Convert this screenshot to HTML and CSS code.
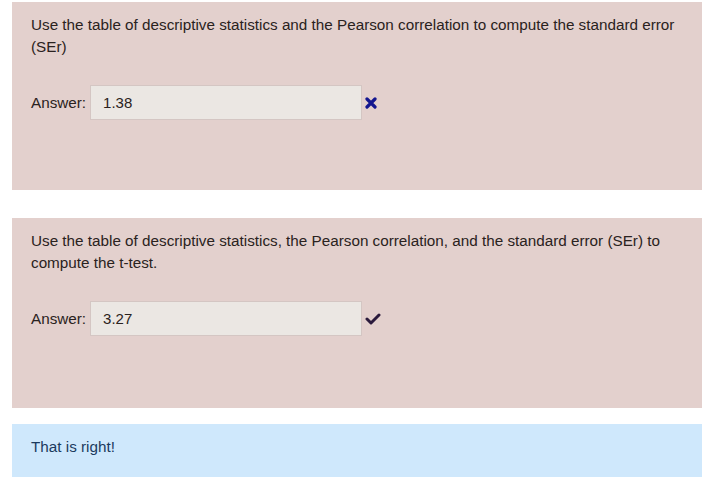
FILE: index.html
```html
<!DOCTYPE html>
<html lang="en">

<head>
    <meta charset="UTF-8">
    <meta name="viewport" content="width=device-width, initial-scale=1.0">
    <title>Correlation Quiz</title>
    <link rel="stylesheet" href="styles.css">
</head>

<body>
    <div class="question">
        <div class="qtext">Use the table of descriptive statistics and the Pearson correlation to compute the standard error (SEr)</div>
        <div class="answer">
            <label for="ans1">Answer:</label>
            <input type="text" id="ans1" value="1.38">
            <!-- wrong mark -->
            <svg class="mark" width="12" height="12" viewBox="0 0 12 12">
                <path d="M2,2 L10,10 M10,2 L2,10" stroke="#14168f" stroke-width="3.2" stroke-linecap="round" />
            </svg>
        </div>
    </div>

    <div class="question">
        <div class="qtext">Use the table of descriptive statistics, the Pearson correlation, and the standard error (SEr) to compute the t-test.</div>
        <div class="answer">
            <label for="ans2">Answer:</label>
            <input type="text" id="ans2" value="3.27">
            <!-- correct mark -->
            <svg class="mark" width="16" height="12" viewBox="0 0 16 12">
                <path d="M2,6 L6,10 L14,2" fill="none" stroke="#2b1a3c" stroke-width="3" stroke-linecap="round" stroke-linejoin="round" />
            </svg>
        </div>
    </div>

    <div class="feedback">That is right!</div>
</body>

</html>
```

FILE: styles.css
```css
body {
    margin: 2px 16px 0 12px;
    font-family: "Liberation Sans", Arial, sans-serif;
    font-size: 15.25px;
    color: #2a2220;
    background-color: #fff;
}

.question {
    background-color: #e3d0cd;
    padding: 12px 19px 0 19px;
    height: 178px;
    margin-bottom: 28px;
}

.question:first-child {
    height: 176px;
}

.question + .question {
    margin-bottom: 16px;
}

.qtext {
    line-height: 22px;
}

.answer {
    display: flex;
    align-items: center;
    margin-top: 27px;
}

.answer label {
    margin-right: 4px;
}

.answer input {
    width: 272px;
    height: 35px;
    box-sizing: border-box;
    padding: 0 12px;
    border: 1px solid #d4c6c3;
    background-color: #ebe7e3;
    font-family: inherit;
    font-size: 15px;
    color: #2a2220;
    outline: none;
}

.mark {
    margin-left: 3px;
}

.feedback {
    background-color: #cfe8fc;
    color: #1b3a5e;
    padding: 12px 19px 19px 19px;
    line-height: 22px;
}
```
